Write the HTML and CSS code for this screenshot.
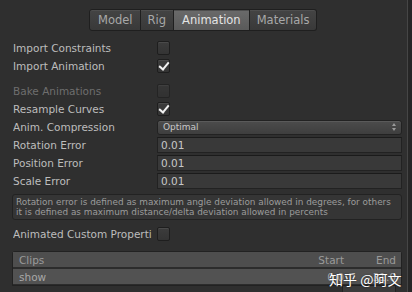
FILE: index.html
```html
<!DOCTYPE html>
<html lang="en">
<head>
  <meta charset="UTF-8" />
  <title>Import Settings - Animation</title>
  <link rel="stylesheet" href="styles.css">
</head>
<body>
  <div class="window">
    <div class="inspector">
      <div class="tabs">
        <span class="tab">Model</span>
        <span class="tab">Rig</span>
        <span class="tab active">Animation</span>
        <span class="tab">Materials</span>
      </div>

      <div class="row"><span class="label">Import Constraints</span><span class="check"></span></div>
      <div class="row"><span class="label">Import Animation</span><span class="check on"></span></div>

      <div class="row gap-top disabled"><span class="label">Bake Animations</span><span class="check"></span></div>
      <div class="row"><span class="label">Resample Curves</span><span class="check on"></span></div>
      <div class="row"><span class="label">Anim. Compression</span>
        <span class="popup">Optimal
          <svg class="arrows" width="4" height="8" viewBox="0 0 4 8"><path d="M2 0L4 3H0Z M2 8L4 5H0Z" fill="#9a9a9a"/></svg>
        </span>
      </div>
      <div class="row"><span class="label">Rotation Error</span><span class="field">0.01</span></div>
      <div class="row"><span class="label">Position Error</span><span class="field">0.01</span></div>
      <div class="row"><span class="label">Scale Error</span><span class="field">0.01</span></div>

      <div class="helpbox">Rotation error is defined as maximum angle deviation allowed in degrees, for others it is defined as maximum distance/delta deviation allowed in percents</div>

      <div class="row"><span class="label">Animated Custom Properti</span><span class="check"></span></div>

      <div class="clips">
        <div class="clips-head"><span class="name">Clips</span><span class="col">Start</span><span class="col">End</span></div>
        <div class="clips-row"><span class="name">show</span><span class="col">0.0</span><span class="col">31.0</span></div>
      </div>
      <div class="clips-foot"><span></span></div>
    </div>
    <div class="scroll"></div>
  </div>
  <div class="watermark">知乎 @阿文</div>
</body>
</html>
```

FILE: styles.css
```css
body {
  margin: 0;
  width: 412px;
  height: 292px;
  overflow: hidden;
  background: #2f2f2f;
  font-family: "DejaVu Sans", sans-serif;
  font-size: 10.5px;
  color: #bdbdbd;
  position: relative;
}
.window { display: flex; height: 292px; }
.inspector {
  width: 408px;
  box-sizing: border-box;
  padding: 9px 5px 0 13px;
}
.scroll {
  width: 4px;
  border-left: 1px solid #464646;
  background: #262626;
}

/* toolbar tabs */
.tabs {
  display: flex;
  margin-left: 76px;
  height: 22px;
  margin-bottom: 8px;
}
.tab {
  display: flex;
  align-items: center;
  justify-content: center;
  padding: 0 7px;
  font-size: 11.5px;
  color: #a8a8a8;
  background: linear-gradient(#444, #393939);
  border: 1px solid #1f1f1f;
  border-left: none;
  box-shadow: inset 0 1px 0 #4e4e4e;
}
.tab:first-child { border-left: 1px solid #1f1f1f; border-radius: 3px 0 0 3px; padding-left: 8px; }
.tab:last-child { border-radius: 0 3px 3px 0; }
.tab.active {
  background: linear-gradient(#6a6a6a, #5a5a5a);
  color: #e4e4e4;
  padding: 0 8px;
}

/* property rows */
.row {
  display: flex;
  align-items: center;
  height: 18px;
}
.row.gap-top { margin-top: 7px; }
.row.disabled .label { color: #6e6e6e; }
.row.disabled .check { opacity: 0.6; }
.label { width: 144px; white-space: nowrap; overflow: hidden; }
.check {
  width: 11px;
  height: 12px;
  border-radius: 2px;
  background: linear-gradient(#3c3c3c, #343434);
  border: 1px solid #1e1e1e;
  box-shadow: inset 0 1px 0 #4a4a4a;
  position: relative;
}
.check.on::after {
  content: "";
  position: absolute;
  left: 3px;
  top: 0;
  width: 4px;
  height: 8px;
  border: solid #f2f2f2;
  border-width: 0 2px 2px 0;
  transform: rotate(40deg);
}
.popup {
  flex: 1;
  height: 13px;
  display: flex;
  align-items: center;
  justify-content: space-between;
  padding: 0 5px 0 5px;
  font-size: 9px;
  color: #c8c8c8;
  background: linear-gradient(#4c4c4c, #3e3e3e);
  border: 1px solid #222;
  border-radius: 3px;
  box-shadow: inset 0 1px 0 #5a5a5a;
}
.field {
  flex: 1;
  height: 14px;
  display: flex;
  align-items: center;
  padding-left: 3px;
  font-size: 10.5px;
  color: #c8c8c8;
  background: #393939;
  border: 1px solid #222;
  border-top-color: #1b1b1b;
}

/* help box */
.helpbox {
  margin: 4px 0 5px -1px;
  padding: 2px 2px 2px 3px;
  font-size: 8.9px;
  line-height: 10px;
  color: #9c9c9c;
  background: #353535;
  border: 1px solid #222;
  border-radius: 3px;
}

/* clips list */
.clips {
  margin: 8px 0 0 -1px;
  border: 1px solid #222;
  border-radius: 3px 3px 0 0;
  background: #2a2a2a;
}
.clips-head, .clips-row {
  display: flex;
  align-items: center;
  height: 15px;
  padding: 0 5px 0 6px;
  font-size: 10.5px;
}
.clips-head { background: #4e4e4e; color: #9a9a9a; border-bottom: 2px solid #2c2c2c; }
.clips-row { background: #525252; color: #a8a8a8; border-bottom: 1px solid #2c2c2c; }
.clips .name { flex: 1; }
.clips .col { width: 52px; text-align: right; }
.clips-foot { display: flex; justify-content: flex-end; padding-right: 6px; }
.clips-foot span {
  width: 52px;
  height: 8px;
  background: #3a3a3a;
  border: 1px solid #222;
  border-top: none;
}

.watermark {
  position: absolute;
  left: 329px;
  top: 269px;
  font-family: "Noto Sans CJK SC", sans-serif;
  font-size: 14px;
  color: #fff;
  text-shadow: 0 0 2px rgba(0,0,0,0.5);
}
```
